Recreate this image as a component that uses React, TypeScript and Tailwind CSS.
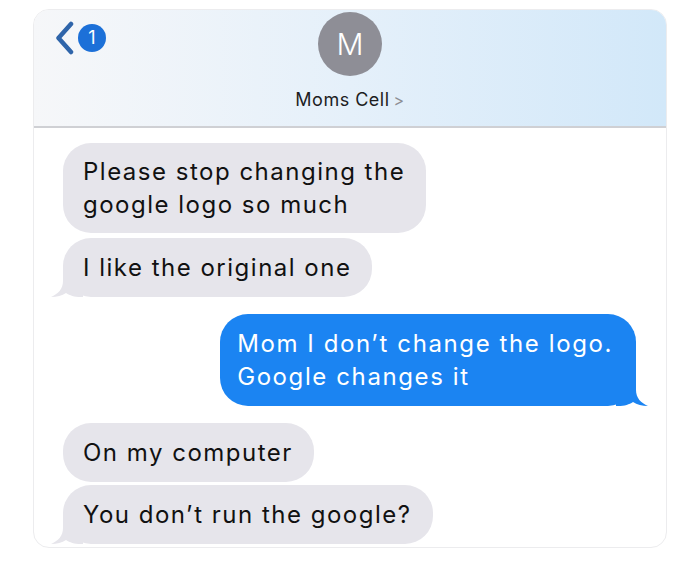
import React from "react";

const FONT = { fontFamily: "Inter, 'Liberation Sans', sans-serif" };

function TailLeft({ color }: { color: string }) {
  return (
    <svg className="absolute left-[-12px] bottom-0" width="32" height="30" viewBox="0 0 32 30">
      <path d="M12 0 L12 14 C12 22 7 27 0 30 C6 30 11 28.5 15 26 C19 28.5 23 30 30 30 L32 30 L32 0 Z" fill={color} />
    </svg>
  );
}

function TailRight({ color }: { color: string }) {
  return (
    <svg className="absolute right-[-12px] bottom-0" width="32" height="30" viewBox="0 0 32 30">
      <path d="M20 0 L20 14 C20 22 25 27 32 30 C26 30 21 28.5 17 26 C13 28.5 9 30 2 30 L0 30 L0 0 Z" fill={color} />
    </svg>
  );
}

function Gray({ children, tail, className = "" }: { children: React.ReactNode; tail?: boolean; className?: string }) {
  return (
    <div className={"relative w-fit ml-[29px] bg-[#e6e5eb] rounded-[28px] pl-[20px] pr-[21px] text-[#111] text-[24px] leading-[33px] tracking-[1.5px] " + className}>
      {tail && <TailLeft color="#e6e5eb" />}
      <div className="relative">{children}</div>
    </div>
  );
}

export default function App() {
  return (
    <div className="w-[700px] h-[577px] bg-white pt-[9px]" style={FONT}>
      <div className="ml-[33px] w-[634px] h-[539px] rounded-[16px] border border-[#ececee] overflow-hidden bg-white">
        <div className="relative h-[118px] border-b-2 border-[#cfd0d4] bg-gradient-to-r from-[#f6f7f9] via-[#e5f0fa] to-[#d2e8f9]">
          <div className="absolute left-[20px] top-[11px] flex items-center">
            <svg width="22" height="34" viewBox="0 0 22 34">
              <path d="M17 3 L4.5 17 L17 31" fill="none" stroke="#2f65aa" strokeWidth="4.5" strokeLinecap="round" strokeLinejoin="round" />
            </svg>
            <div className="ml-[2px] w-[28px] h-[28px] rounded-full bg-[#1c70d8] flex items-center justify-center text-white text-[18px] leading-none">1</div>
          </div>
          <div className="flex flex-col items-center pt-[2px]">
            <div className="w-[64px] h-[64px] rounded-full bg-[#8e8e96] flex items-center justify-center text-white text-[30px] font-light">M</div>
            <div className="mt-[13px] flex items-center text-[18px] leading-[22px] tracking-[0.5px] text-[#1d1d1f]">
              <span>Moms Cell</span>
              <span className="ml-[4px] text-[#8e8e93] text-[16px]">&gt;</span>
            </div>
          </div>
        </div>
        <div className="pt-[15px]">
          <Gray className="py-[12px]">
            <div>Please stop changing the</div>
            <div>google logo so much</div>
          </Gray>
          <Gray tail className="mt-[5px] py-[13px]">
            I like the original one
          </Gray>
          <div className="relative w-fit ml-auto mr-[30px] mt-[17px] bg-[#1b84f2] rounded-[28px] pl-[17px] pr-[23px] py-[13px] text-white text-[24px] leading-[33px] tracking-[1.6px]">
            <TailRight color="#1b84f2" />
            <div className="relative">
              <div>Mom I don’t change the logo.</div>
              <div>Google changes it</div>
            </div>
          </div>
          <Gray className="mt-[17px] py-[13px]">On my computer</Gray>
          <Gray tail className="mt-[3px] py-[13px]">You don’t run the google?</Gray>
        </div>
      </div>
    </div>
  );
}
